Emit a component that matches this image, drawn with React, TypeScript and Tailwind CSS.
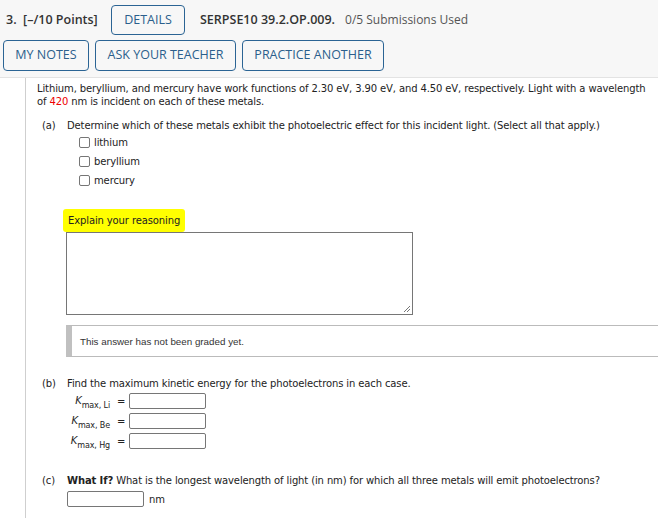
import React from 'react';

const verdana = { fontFamily: '"DejaVu Sans", Verdana, sans-serif' };

function Checkbox({ label }: { label: string }) {
  return (
    <div className="flex items-center h-[19px]">
      <span className="w-[11px] h-[11px] border border-[#767676] rounded-[2px] bg-white mr-[4px]" />
      <span>{label}</span>
    </div>
  );
}

function KRow({ sub }: { sub: string }) {
  return (
    <div className="flex items-start h-[20px]">
      <div className="w-[43px] flex justify-end whitespace-nowrap">
        <span className="italic mt-[1px]">K</span>
        <span className="text-[8px] leading-[10px] relative top-[8px]">{sub}</span>
      </div>
      <span className="w-[19px] pl-[7px] pt-[2px]">=</span>
      <span className="w-[77px] h-[16px] border border-[#767676] rounded-[2px] bg-white" />
    </div>
  );
}

export default function App() {
  return (
    <div className="w-[658px] h-[518px] overflow-hidden bg-white">
      <div className="bg-[#f7f7f7] h-[78px] border-b border-[#e3e3e3] font-['Open_Sans',sans-serif] text-[12.5px] text-[#333]">
        <div className="flex items-center h-[40px]">
          <span className="font-semibold ml-[6px] w-[105px]">3.&nbsp; [–/10 Points]</span>
          <button className="h-[30px] w-[74px] border border-[#2b6494] rounded-[4px] text-[#2b5f8c] bg-[#f7f7f7]">DETAILS</button>
          <span className="font-semibold ml-[15px]">SERPSE10 39.2.OP.009.</span>
          <span className="ml-[10px] text-[12px] text-[#555]">0/5 Submissions Used</span>
        </div>
        <div className="flex gap-[6px] ml-[3px]">
          <button className="h-[31px] w-[86px] border border-[#2b6494] rounded-[4px] text-[#2b5f8c]">MY NOTES</button>
          <button className="h-[31px] w-[141px] border border-[#2b6494] rounded-[4px] text-[#2b5f8c]">ASK YOUR TEACHER</button>
          <button className="h-[31px] w-[142px] border border-[#2b6494] rounded-[4px] text-[#2b5f8c]">PRACTICE ANOTHER</button>
        </div>
      </div>

      <div className="flex h-[440px]">
        <div className="w-[26px] border-r border-[#cfcfcf]" />
        <div className="flex-1 pl-[11px] pr-[8px] pt-[4px] text-[10px] leading-[13px] tracking-[-0.12px] text-[#222]" style={verdana}>
          <p>
            Lithium, beryllium, and mercury have work functions of 2.30 eV, 3.90 eV, and 4.50 eV, respectively. Light with a wavelength of{' '}
            <span className="text-[#e00]">420</span> nm is incident on each of these metals.
          </p>

          <div className="mt-[11px] flex">
            <span className="w-[30px] pl-[5px]">(a)</span>
            <div>
              <p>Determine which of these metals exhibit the photoelectric effect for this incident light. (Select all that apply.)</p>
              <div className="ml-[12px] mt-[1px]">
                <Checkbox label="lithium" />
                <Checkbox label="beryllium" />
                <Checkbox label="mercury" />
              </div>
            </div>
          </div>

          <div className="ml-[31px] mt-[19px]">
            <span className="inline-block bg-[#ffff00] px-[5px] pt-[5px] pb-[5px] -ml-[5px] rounded-[3px]">Explain your reasoning</span>
          </div>
          <div className="ml-[29px] w-[347px] h-[83px] border border-[#767676] bg-white relative">
            <svg className="absolute right-[1px] bottom-[1px]" width="8" height="8" viewBox="0 0 8 8">
              <path d="M7 1 L1 7 M7 4 L4 7" stroke="#777" strokeWidth="1" />
            </svg>
          </div>

          <div className="ml-[29px] -mr-[8px] mt-[10px] h-[32px] border-y border-[#bbb] border-l-[6px] border-l-[#c0c0c0] flex items-center pl-[8px] text-[9.8px] tracking-normal text-[#333] font-['Liberation_Sans',Arial,sans-serif]">
            This answer has not been graded yet.
          </div>

          <div className="mt-[20px] flex">
            <span className="w-[30px] pl-[5px]">(b)</span>
            <div>
              <p>Find the maximum kinetic energy for the photoelectrons in each case.</p>
              <div className="mt-[3px]">
                <KRow sub="max, Li" />
                <KRow sub="max, Be" />
                <KRow sub="max, Hg" />
              </div>
            </div>
          </div>

          <div className="mt-[21px] flex">
            <span className="w-[30px] pl-[5px]">(c)</span>
            <div>
              <p>
                <span className="font-bold">What If?</span> What is the longest wavelength of light (in nm) for which all three metals will emit photoelectrons?
              </p>
              <div className="flex items-center mt-[4px]">
                <span className="w-[77px] h-[16px] border border-[#767676] rounded-[2px] bg-white" />
                <span className="ml-[5px]">nm</span>
              </div>
            </div>
          </div>
        </div>
      </div>
    </div>
  );
}
